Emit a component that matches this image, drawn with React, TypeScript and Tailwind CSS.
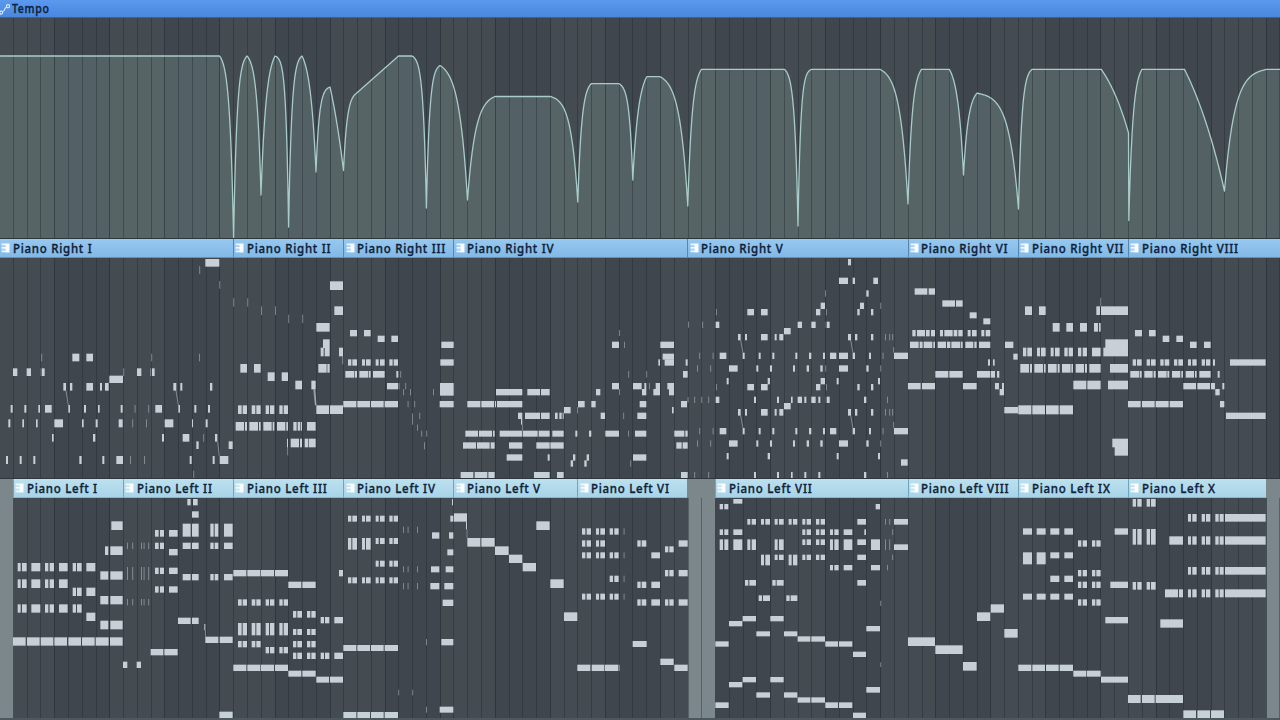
import React from "react";

const BAR = 13.766;
const OFFSET = -0.3;
const BARS = Array.from({ length: 94 }, (_, i) => i);
const barX = (bar: number) => OFFSET + bar * BAR;

/* Note rows: [top, bottom, "start-end ..."] measured in thirds of a pixel from the block origin. */
type Row = [number, number, string];
type Block = { origin: number; rows: Row[]; slides?: string };
type Clip = { name: string; from: number; to: number };

const P8 = "369-379 382-396 411-420 423-437 452-461 465-479 493-503 506-519";
const Q8 = "39-50 53-66 80-91 94-107 122-132 135-148 163-173 176-189";
const D4 = "355-394 397-435 438-476 479-519";
const STAB = "204-214 217-231 246-256 259-272";
const GHOST = "381-382 397-398 423-424 431-432 445-446";
const II_A = "465-476 480-492 507-533";
const II_B = "548-572 576-596 631-641 644-655 672-698";
const VI6 = "396-406 410-423 438-447 451-465 479-489 493-506 521-523";
const VII4 = "367-376 380-393 408-418 422-435";
const IX4 = "534-544 548-561 576-586 589-602";
const X4 = "698-708 712-725 740-750 753-767";
const X7 = "864-873 877-890 905-915 918-931 946-956 959-971 975-1097";
const V_RUN = "174-182 195-201 243-263 284-290 298-310 504-513 525-532 573-580 615-617 628-630 637-639";
const V_MID = "108-109 202-222 243-263 408-421 438-440 532-539 573-580";

const RIGHT_BLOCKS: Block[] = [
  {
    origin: 0,
    rows: [
      [69, 92, "616-658"],
      [90, 114, "598-600"],
      [135, 158, "658-660"],
      [353, 376, "124-125 217-238 259-279 454-455 597-598"],
      [397, 420, "39-52 80-93 122-124 126-134 370-371 411-424 451-453 456-464"],
      [419, 441, "328-369"],
      [441, 464, "190-198 210-217 259-279 300-306 315-326 520-529 541-547 630-637"],
      [507, 530, "32-38 73-79 115-120 135-155 205-210 252-258 294-299 362-368 404-405 445-446 466-486 535-540 583-589 624-630"],
      [550, 574, "25-31 67-72 108-113 163-189 246-251 287-293 356-368 397-398 438-439 494-520 576-579 617-623"],
      [594, 617, "156-161 279-286 486-492 548-568 610-611 645-652"],
      [616, 639, "589-596 686-698"],
      [660, 684, "18-24 59-65 100-106 238-245 307-313 349-369 390-391 432-433 569-575 638-644 659-685"],
      [704, 727, "580-581"],
    ],
    slides: "M198 464L205 507M528 464L535 507M653 617L658 660",
  },
  {
    origin: 675,
    rows: [
      [136, 162, "315-354"],
      [187, 212, "25-26 67-68"],
      [211, 237, "108-109 150-151 328-354"],
      [236, 261, "190-191 232-233"],
      [261, 287, "274-314"],
      [310, 336, "294-314"],
      [335, 361, "287-296 299-314 342-354"],
      [361, 385, "352-353"],
      [384, 410, "46-66 87-107 280-305 307-314"],
      [409, 435, "128-149 170-189"],
      [434, 460, "211-231 259-272"],
      [508, 534, Q8 + " 274-312 315-354"],
      [558, 584, "32-57 60-66 73-99 102-107 115-140 143-148 156-181 184-189 205-215 218-225 227-231 246-272"],
      [608, 634, "186-189 197-222 225-231 239-250 252-272"],
      [634, 658, "187-189"],
      [282, 301, "375-396 417-437"],
      [299, 318, "458-479 499-519"],
      [317, 336, "649-686"],
      [370, 389, P8 + " 646-686"],
      [405, 425, "361-388 390-396 403-429 431-437 444-479 514-520 526-528"],
      [441, 460, "486-519 521-523 541-543"],
      [441, 479, "645-686"],
      [459, 478, "534-536 555-557 624-626"],
      [495, 514, D4 + " 548-550 568-570 644-686"],
      [530, 549, "583-585"],
      [532, 566, "561-563"],
      [566, 584, "576-578"],
      [584, 602, "589-591 604-605"],
      [619, 640, "597-598"],
    ],
    slides: "M268 460L273 508M270 460L273 508M266 460L271 508",
  },
  {
    origin: 1350,
    rows: [
      [282, 300, "507-509"],
      [257, 275, "714-716"],
      [317, 336, "486-507 522-524 631-672"],
      [353, 371, "638-672"],
      [370, 389, "625-630 644-672 707-713"],
      [405, 425, "535-537 589-591 699-713"],
      [441, 460, "486-507 549-575 583-589 597-599 617-630 652-672"],
      [459, 478, "138-217 232-270 273-299 438-451 507-509 576-589 610-630 657-672"],
      [483, 500, "713-715"],
      [495, 514, "52-91 94-132 135-138 141-217 384-404 424-437 569-589 693-711"],
      [513, 532, "342-362 381-383 666-671"],
      [530, 549, "204-217 225-270 273-299 315-323 328-335 338-341 452-465 520-522 562-589"],
      [549, 566, "213-217"],
      [566, 584, "216-218"],
      [584, 602, "46-84 87-126 129-134 149-217 219-263 266-299 307-341 376-382 417-424 466-507 534-536 555-589 673-703 706-713"],
      [619, 638, "39-78 81-119 122-134 177-217 259-299 301-341 679-695 698-713"],
      [655, 674, "170-217 293-299 369-376 410-417 549-589"],
      [673, 692, "362-369 403-410 541-543"],
      [708, 727, "32-70 74-112 115-134 252-299 321-341 693-713"],
    ],
  },
  {
    origin: 2040,
    rows: [
      [69, 88, "504-513"],
      [125, 144, "477-504 518-525 580-594"],
      [163, 182, "435-437 559-566"],
      [200, 219, "422-435 540-552 601-602"],
      [219, 238, V_MID],
      [257, 276, "67-68 107-118 353-366 394-407 437-439 441-449"],
      [276, 295, "312-332"],
      [294, 313, V_RUN],
      [333, 350, "640-642"],
      [350, 369, "58-59 98-99 119-139 188-194 236-242 277-283 346-352 387-394 429-435 450-469 477-504 518-525 567-573 608-610 642-684"],
      [388, 407, "51-52 91-92 147-173 229-235 270-276 339-345 380-387 421-428 436-437 477-504 559-566 601-602"],
      [426, 445, "140-146 263-270 422-435 470-476 594-600"],
      [444, 463, V_MID],
      [482, 501, "43-44 64-65 85-86 107-118 222-228 291-297 333-338 353-366 373-379 394-407 415-421 437-439 441-449 552-559 621-623"],
      [501, 520, "312-332"],
      [519, 539, V_RUN],
      [558, 576, "640-642"],
      [576, 595, "58-59 98-99 119-139 188-194 236-242 277-283 346-352 387-394 429-435 450-469 518-525 567-573 608-610 642-684"],
      [613, 632, "51-52 91-92 147-173 229-235 270-276 339-345 380-387 421-428 477-504 559-566 601-602"],
      [651, 670, "140-146 263-270 470-476 594-600"],
      [670, 689, "663-683"],
      [708, 727, "43-44 85-86 222-228 291-297 333-338 373-379 415-421 552-559 621-623"],
    ],
    slides: "M182 313L189 350M512 313L519 350M182 539L189 576M512 539L519 576",
  },
  {
    origin: 2700,
    rows: [
      [157, 176, "44-82 86-105"],
      [193, 212, "127-165 168-188"],
      [229, 247, "209-230"],
      [247, 265, "250-271"],
      [282, 301, "37-47 51-75 78-89 93-105 120-129 133-158 161-172 175-188 203-212 216-230 244-253 257-271"],
      [317, 336, "30-56 59-68 71-97 100-105 113-138 141-151 154-180 182-188 196-220 223-230 237-271 315-340"],
      [353, 371, "340-353"],
      [370, 389, "264-270 279-284"],
      [405, 425, "106-145 148-188 231-270 272-285 291-298"],
      [441, 460, "24-62 66-105 189-230 285-297 306-312"],
      [459, 478, "299-312"],
      [513, 532, "313-354"],
      [185, 211, "601-602"],
      [211, 237, "375-396 417-437 589-600 603-684"],
      [261, 287, "458-479 499-519 540-561 582-594 597-602"],
      [310, 336, "616-684"],
      [335, 361, P8 + " 534-544 548-561 576-602 610-684"],
      [384, 410, "361-387 390-396 403-429 432-437 444-470 473-479 486-512 514-519 527-552 555-561 568-602 630-684"],
      [434, 460, "520-559 562-602 624-684"],
      [508, 535, D4],
      [608, 634, "637-684"],
      [633, 659, "644-684"],
      [282, 301, "705-726 747-767"],
      [299, 318, "788-808 829-849"],
      [317, 336, "870-890 912-932"],
      [370, 389, "698-708 711-725 740-750 753-767 781-791 794-808 822-832 835-849 864-873 877-890 905-915 918-931 939-945 990-1097"],
      [405, 425, "691-717 719-725 733-758 761-767 774-800 802-808 816-841 844-849 857-882 885-890 898-932 953-959"],
      [441, 460, "850-888 892-930 933-945 967-973"],
      [459, 478, "946-959"],
      [495, 514, "684-722 726-764 767-806 809-849 960-973"],
      [530, 549, "978-1097"],
    ],
  },
];

const LEFT_BLOCKS: Block[] = [
  {
    origin: 0,
    rows: [
      [69, 88, "562-572 579-593"],
      [106, 125, "576-596"],
      [136, 162, "334-368"],
      [143, 182, II_B],
      [162, 182, II_A],
      [200, 219, GHOST + " 465-476 480-492 " + II_B],
      [211, 237, "315-325 331-368"],
      [219, 238, "507-533"],
      [261, 286, "53-62 66-80 94-121 135-145 149-162 177-203 218-228 231-245 259-286"],
      [275, 294, II_A],
      [273, 312, GHOST],
      [286, 311, "301-325 331-368"],
      [294, 313, II_B],
      [310, 336, "53-62 66-80 94-121 135-145 149-162 177-203"],
      [331, 350, II_A],
      [335, 360, "218-228 231-245 259-286"],
      [360, 385, "301-325 331-368"],
      [369, 388, GHOST],
      [385, 410, "53-62 66-80 94-121 135-145 149-162 177-203 218-228 231-245"],
      [410, 435, "259-286"],
      [425, 444, "534-572 576-596"],
      [434, 460, "301-325 331-368"],
      [444, 463, "613-616"],
      [463, 482, "615-616"],
      [482, 501, "616-655 659-698"],
      [484, 509, "39-77 81-119 122-160 163-201 205-243 246-284 287-326 330-368"],
      [519, 538, "452-490 493-533"],
      [557, 576, "369-382 410-423"],
      [707, 726, "658-698"],
    ],
  },
  {
    origin: 675,
    rows: [
      [282, 301, "25-64 67-106 108-147 150-189 342-354"],
      [317, 336, "190-229 232-272"],
      [370, 389, Q8],
      [405, 425, STAB],
      [423, 442, "287-297 300-313 328-354"],
      [441, 478, Q8],
      [459, 477, STAB],
      [495, 514, "39-50 53-66 80-91 94-107 " + STAB],
      [513, 532, "122-132 135-148 163-173 176-189"],
      [530, 549, STAB + " 287-297 300-313 328-354"],
      [566, 585, "25-64 67-106 108-147 150-189"],
      [584, 602, "190-229 232-272"],
      [602, 620, "274-312 315-354"],
      [69, 88, "681-684"],
      [119, 137, P8 + " 676-685"],
      [152, 171, "534-535 548-549 576-577"],
      [169, 188, "621-643 672-685"],
      [186, 221, "369-379 382-396 411-420 423-437"],
      [186, 204, "452-461 465-479 493-503 506-519"],
      [220, 238, "667-685"],
      [254, 272, "452-461 465-479 493-503 506-519"],
      [271, 289, "534-535 548-549 576-577 618-643 662-685"],
      [304, 322, P8],
      [321, 340, "534-535 548-549 576-577 616-643 658-685"],
      [371, 390, "653-685"],
      [489, 508, "603-605 649-685"],
      [507, 525, D4],
      [641, 658, "520-522 562-564"],
      [692, 710, "603-605 644-685"],
      [708, 727, D4],
    ],
  },
  {
    origin: 1350,
    rows: [
      [112, 137, "12-51"],
      [137, 160, "48-51"],
      [160, 186, "50-51"],
      [136, 162, "259-299"],
      [186, 212, "52-91 94-134"],
      [211, 237, "135-176"],
      [236, 261, "177-217"],
      [261, 286, "218-258"],
      [310, 336, "301-341"],
      [409, 435, "342-382"],
      [157, 176, VI6],
      [193, 212, "396-406 410-423 438-447 451-465 562-572 575-589 686-713"],
      [211, 229, "645-655 658-671"],
      [229, 247, VI6 + " 604-630"],
      [282, 301, "645-655 658-671 686-713"],
      [299, 318, "479-489 493-506 521-523"],
      [317, 336, "562-572 575-589 604-630"],
      [353, 371, VI6],
      [370, 389, "562-572 575-589 604-630 645-655 658-671 686-713"],
      [495, 513, "548-590"],
      [548, 567, "631-671"],
      [566, 585, "382-421 425-463 465-505 507-509 673-713"],
    ],
  },
  {
    origin: 2040,
    rows: [
      [69, 83, "160-187"],
      [84, 100, "119-129 133-145 587-600"],
      [129, 146, "202-211 215-228 243-252 256-270 284-293 297-311 326-335 339-352 " + VII4 + " 532-558 615-617 628-630 642-684"],
      [160, 177, "119-129 133-145 160-187 " + VII4 + " 450-459 463-476 491-517 553-558 637-639"],
      [190, 222, "119-129 133-145 160-187 202-211 215-228 284-293 297-311 450-459 463-476 491-517 573-600 615-617 628-630"],
      [190, 207, VII4 + " 532-558"],
      [205, 222, "642-684"],
      [236, 252, "284-293 297-311 " + VII4 + " 532-558 637-639"],
      [236, 268, "243-252 256-270 326-335 339-352"],
      [267, 283, "450-459 463-476 491-517 573-600 621-623"],
      [312, 329, "195-205 208-228 277-287 290-311 532-558"],
      [358, 375, "236-246 249-270 319-329 332-352"],
      [374, 390, "601-602"],
      [420, 436, "188-228 271-311"],
      [435, 451, "147-187"],
      [450, 466, "559-600"],
      [466, 481, "229-270 312-352"],
      [481, 497, "353-391 394-435"],
      [496, 512, "106-146 436-474 477-517"],
      [527, 543, "519-558"],
      [559, 573, "601-602"],
      [603, 619, "188-228 271-311"],
      [618, 634, "147-187"],
      [633, 650, "559-600"],
      [649, 665, "229-270 312-352"],
      [664, 680, "353-391 394-435"],
      [679, 696, "106-146 436-474 477-517"],
      [710, 726, "519-558"],
    ],
  },
  {
    origin: 2700,
    rows: [
      [385, 410, "272-312"],
      [409, 435, "231-271"],
      [459, 485, "313-353"],
      [484, 510, "24-105"],
      [508, 534, "106-188"],
      [558, 584, "189-230"],
      [157, 176, "369-396 410-437 451-478 493-519 644-684"],
      [193, 212, IX4],
      [229, 265, "369-396 410-437"],
      [229, 247, "451-478 493-519"],
      [282, 301, IX4],
      [299, 318, "451-478 493-519"],
      [317, 336, IX4 + " 631-684"],
      [353, 371, "369-396 410-437 451-478 493-519"],
      [370, 389, IX4],
      [423, 442, "616-684"],
      [566, 585, D4],
      [584, 602, "520-559 561-602"],
      [602, 620, "603-684"],
      [69, 92, X4],
      [159, 206, X4],
      [318, 341, X4],
      [114, 137, X7],
      [181, 206, "808-849 " + X7],
      [273, 296, X7],
      [340, 364, "795-834 837-849 " + X7],
      [430, 455, "781-849"],
      [657, 681, "684-722 726-764 767-849"],
      [703, 726, "850-888 892-930 933-972"],
    ],
  },
];

const RIGHT_CLIPS: Clip[] = [
  { name: "Piano Right I", from: 0, to: 17 },
  { name: "Piano Right II", from: 17, to: 25 },
  { name: "Piano Right III", from: 25, to: 33 },
  { name: "Piano Right IV", from: 33, to: 50 },
  { name: "Piano Right V", from: 50, to: 66 },
  { name: "Piano Right VI", from: 66, to: 74 },
  { name: "Piano Right VII", from: 74, to: 82 },
  { name: "Piano Right VIII", from: 82, to: 94 },
];

const LEFT_CLIPS: Clip[] = [
  { name: "Piano Left I", from: 1, to: 9 },
  { name: "Piano Left II", from: 9, to: 17 },
  { name: "Piano Left III", from: 17, to: 25 },
  { name: "Piano Left IV", from: 25, to: 33 },
  { name: "Piano Left V", from: 33, to: 42 },
  { name: "Piano Left VI", from: 42, to: 50 },
  { name: "Piano Left VII", from: 52, to: 66 },
  { name: "Piano Left VIII", from: 66, to: 74 },
  { name: "Piano Left IX", from: 74, to: 82 },
  { name: "Piano Left X", from: 82, to: 92 },
];

/* Tempo automation: [x, y, tension]; the tension bends the segment that ends at the point. */
const TEMPO: [number, number, number][] = [
  [-2, 56, 0], [219.6, 56, 0], [233.6, 238, 3.6], [247, 56, -4], [261, 195, 3.5], [275, 56, -2.7],
  [288.6, 227, 5.2], [302, 56, -4.3], [316, 172, 2.4], [330, 87, -4.3], [343.5, 170.5, 0.6],
  [354.5, 95, -3], [398.5, 56, 0], [412, 56, 0], [426.4, 208, 4.5], [440, 65.5, -4.3],
  [467.5, 200, 3.3], [495, 96.5, -3.5], [550.5, 96.5, 0], [577.8, 202, 4], [591.3, 83.7, -3.5],
  [619, 83.7, 0], [632.8, 180, 4], [646.8, 76.7, -2.4], [660, 76.7, 0], [687.8, 206, 3.5],
  [701.5, 69.4, -3.2], [784.5, 69.4, 0], [798, 226, 4], [811.5, 69.4, -5], [880, 69.4, 0],
  [908, 204, 3.6], [921.5, 69.4, -3.2], [949.3, 69.4, 0], [963.5, 175, 2.5], [977, 93.2, -2.8],
  [1018.5, 209, 4.4], [1032, 69.4, -4], [1101.3, 69.4, 0], [1128.5, 133, 0.9], [1128.8, 220.5, 0],
  [1142, 69.4, -3.2], [1184.5, 69.4, 0], [1224.5, 191, 0.8], [1267, 69.4, -4.3], [1284, 69.4, 0],
];

function tempoPath(): string {
  let d = `M${TEMPO[0][0]} ${TEMPO[0][1] - 18}`;
  for (let i = 1; i < TEMPO.length; i++) {
    const [x0, y0] = TEMPO[i - 1];
    const [x1, y1, k] = TEMPO[i];
    const steps = k === 0 ? 1 : 24;
    for (let s = 1; s <= steps; s++) {
      const t = s / steps;
      const f = k === 0 ? t : (Math.exp(k * t) - 1) / (Math.exp(k) - 1);
      d += `L${(x0 + (x1 - x0) * t).toFixed(2)} ${(y0 + (y1 - y0) * f - 18).toFixed(2)}`;
    }
  }
  return d;
}

function Shade() {
  return (
    <>
      <rect width="1280" height="220" fill="#444c51" />
      {BARS.filter((b) => b % 8 === 4).map((b) => (
        <rect key={b} x={barX(b)} y="0" width={BAR * 4} height="220" fill="#3f464d" />
      ))}
    </>
  );
}

function GridLines() {
  return (
    <>
      {BARS.filter((b) => b > 0).map((b) => (
        <rect
          key={b}
          x={Math.floor(barX(b))}
          y="0"
          width="1"
          height="220"
          fill="#1d2930"
          opacity={b % 4 === 0 ? 0.55 : 0.4}
        />
      ))}
    </>
  );
}

function Notes({ blocks }: { blocks: Block[] }) {
  return (
    <g transform="scale(0.33333)" fill="#c6d0d6">
      {blocks.map((block) => (
        <g key={block.origin} transform={`translate(${block.origin} -66)`}>
          {block.rows.map(([top, bottom, spans], r) =>
            spans.split(" ").map((span) => {
              const [a, b] = span.split("-").map(Number);
              const thin = b - a <= 2;
              return (
                <rect
                  key={`${r}-${a}`}
                  x={a}
                  y={top}
                  width={thin ? 2.4 : b - a}
                  height={bottom - top}
                  opacity={thin ? 0.6 : 1}
                />
              );
            }),
          )}
          {block.slides && <path d={block.slides} stroke="#c6d0d6" strokeWidth="2.2" opacity="0.7" fill="none" />}
        </g>
      ))}
    </g>
  );
}

function PianoIcon() {
  return (
    <svg className="block h-[10px] w-[9px] shrink-0" viewBox="0 0 9 10">
      <rect x="4.6" y="0.5" width="3.9" height="9" fill="#fff" opacity="0.95" />
      <path d="M0.5 1.4H5M0.5 4.9H5M0.5 8.4H5" stroke="#fff" strokeWidth="1.7" opacity="0.85" />
      <path d="M0.5 3.1H5M0.5 6.6H5" stroke="#fff" strokeWidth="1.2" opacity="0.3" />
    </svg>
  );
}

function ClipHeaders({ clips, tone }: { clips: Clip[]; tone: "right" | "left" }) {
  const cells: React.ReactNode[] = [];
  let cursor = 0;
  for (const clip of clips) {
    if (clip.from > cursor) {
      cells.push(<div key={`gap-${cursor}`} className="shrink-0" style={{ width: (clip.from - cursor) * BAR }} />);
    }
    cells.push(
      <div
        key={clip.name}
        className={
          tone === "right"
            ? "flex h-full shrink-0 items-center gap-[2.5px] border-b border-l border-b-[#5f93bd] border-l-[#5488b3] bg-linear-to-b from-[#97c8ef] to-[#83b9e6] pl-[1.2px]"
            : "flex h-full shrink-0 items-center gap-[2.5px] border-b border-l border-b-[#8ab8c9] border-l-[#6fa5bd] bg-linear-to-b from-[#bce0ee] to-[#a8d4e8] pl-[1.2px]"
        }
        style={{ width: (clip.to - clip.from) * BAR }}
      >
        <PianoIcon />
        <span className="origin-left scale-x-[0.88] text-[13px] leading-[18px] font-medium tracking-[0.85px] whitespace-nowrap [-webkit-text-stroke:0.35px_#0c2138]">
          {clip.name}
        </span>
      </div>,
    );
    cursor = clip.to;
  }
  return (
    <div className="overflow-hidden">
      <div className="-ml-[0.8px] flex h-[19px] w-[1296px]">{cells}</div>
    </div>
  );
}

function EmptySlots() {
  return (
    <>
      {[
        [0, 1],
        [50, 52],
        [92, 94],
      ].map(([a, b]) => (
        <rect key={a} x={barX(a)} y="0" width={(b - a) * BAR} height="220" fill="#7c878b" />
      ))}
    </>
  );
}

export default function App() {
  const curve = tempoPath();
  return (
    <main className="flex h-[720px] w-[1280px] flex-col overflow-hidden bg-[#2c373e] font-['Noto_Sans',sans-serif] text-[#0c2138]">
      <section className="flex h-[239px] shrink-0 flex-col">
        <header className="flex h-[18px] shrink-0 items-center gap-[2px] border-b border-[#2f62b0] bg-linear-to-b from-[#5a99ee] to-[#4a87df]">
          <svg className="block h-[12px] w-[10px] shrink-0" viewBox="0 0 10 12" fill="none" stroke="#d8e8ff" strokeWidth="1.1">
            <circle cx="1.2" cy="9.6" r="1.5" />
            <circle cx="8" cy="3.2" r="1.6" />
            <path d="M2.4 8.6L4.3 7.4L5 5.3L6.7 4.3" />
          </svg>
          <span className="origin-left scale-x-[0.81] text-[13px] leading-[17px] font-medium tracking-[0.85px] whitespace-nowrap [-webkit-text-stroke:0.35px_#0c2138]">
            Tempo
          </span>
        </header>
        <svg className="block h-[220px] w-[1280px]" viewBox="0 0 1280 220">
          <Shade />
          <path d={`${curve}L1284 220L-2 220Z`} fill="#667879" opacity="0.54" />
          <GridLines />
          <path d={curve} fill="none" stroke="#a9cbc9" strokeWidth="1.3" strokeLinejoin="round" />
        </svg>
      </section>

      <section className="flex h-[240px] shrink-0 flex-col">
        <ClipHeaders clips={RIGHT_CLIPS} tone="right" />
        <svg className="block h-[220px] w-[1280px]" viewBox="0 0 1280 220">
          <Shade />
          <GridLines />
          <Notes blocks={RIGHT_BLOCKS} />
        </svg>
      </section>

      <section className="flex h-[241px] shrink-0 flex-col">
        <div className="bg-[#7c878b]">
          <ClipHeaders clips={LEFT_CLIPS} tone="left" />
        </div>
        <svg className="block h-[220px] w-[1280px]" viewBox="0 0 1280 220">
          <Shade />
          <EmptySlots />
          <GridLines />
          <Notes blocks={LEFT_BLOCKS} />
        </svg>
        <div className="h-[2px] shrink-0 bg-[#4c585e]" />
      </section>
    </main>
  );
}
